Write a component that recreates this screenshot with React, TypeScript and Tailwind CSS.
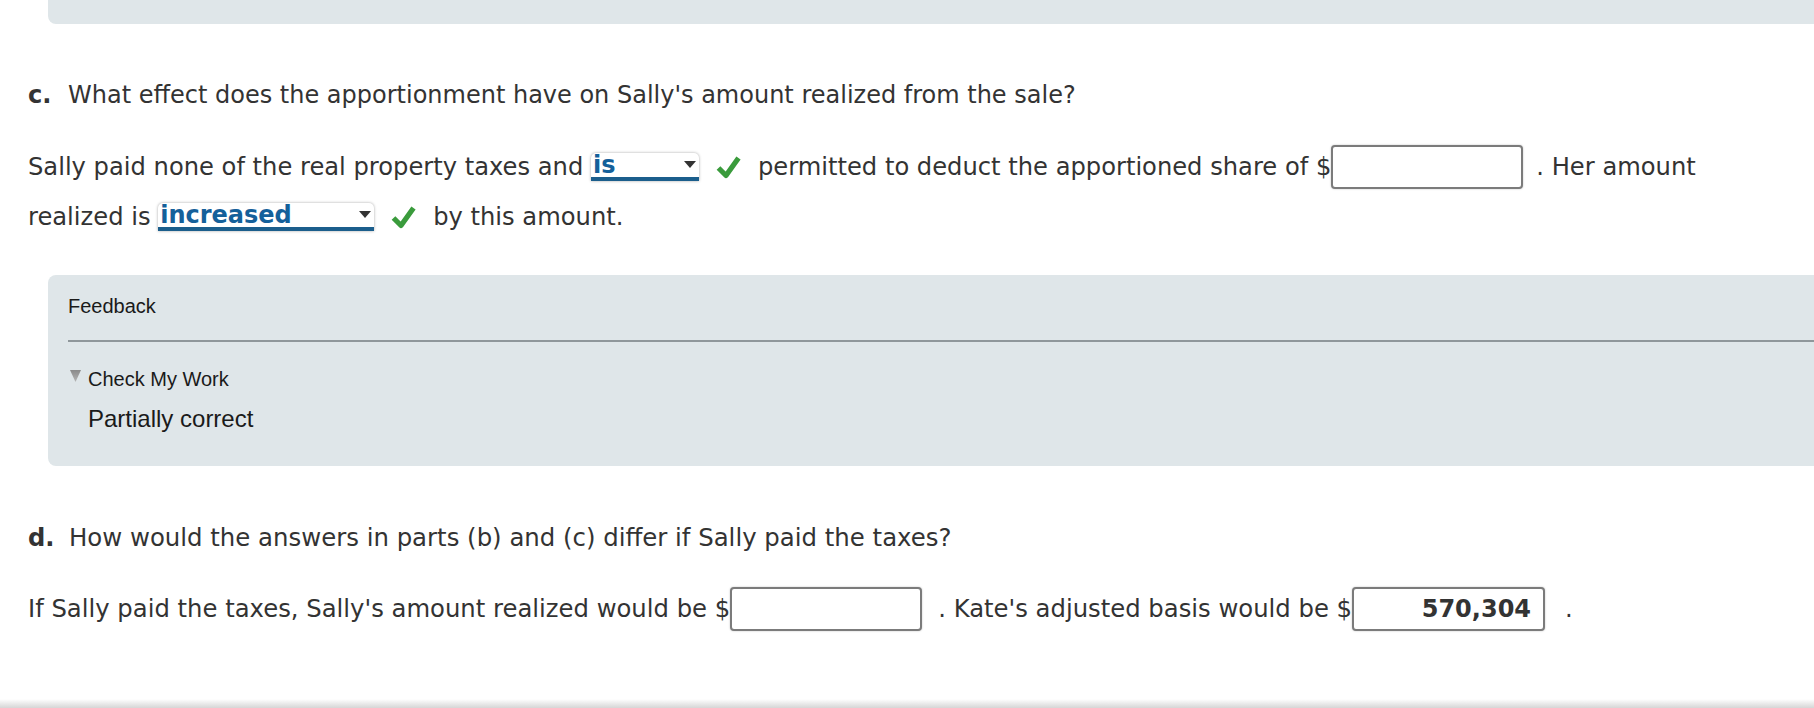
import React from 'react';

function Check() {
  return (
    <svg width="25" height="25" viewBox="0 0 25 25" className="shrink-0">
      <path d="M2.5 13 L10 20.5 L22.5 3" fill="none" stroke="#3a9b3c" strokeWidth="5.2" strokeLinejoin="round" />
    </svg>
  );
}

function Dropdown({ value, width }: { value: string; width: string }) {
  return (
    <span className={`relative inline-flex h-[28px] ${width} items-start rounded-t-[5px] bg-white shadow-[0_0_3px_rgba(0,0,0,0.35)] border-b-[4px] border-[#1b5e8c]`}>
      <span className="pl-[2px] text-[24px] font-bold leading-[25px] text-[#14609a]">{value}</span>
      <svg width="12" height="7" viewBox="0 0 12 7" className="absolute right-[3px] top-[8px]">
        <polygon points="0,0 12,0 6,7" fill="#333" />
      </svg>
    </span>
  );
}

function AmountBox({ value, width }: { value?: string; width: string }) {
  return (
    <span className={`flex h-[44px] ${width} items-center justify-end rounded-[4px] border-2 border-[#7b7b7b] bg-white pr-[12px] shadow-[0_0_2px_rgba(0,0,0,0.25)] text-[24px] font-bold text-[#333]`}>
      {value}
    </span>
  );
}

export default function App() {
  return (
    <div className="relative h-[708px] w-full overflow-hidden bg-white font-['DejaVu_Sans',Verdana,sans-serif] text-[24.2px] text-[#333]">
      {/* previous part panel, cut off at the top */}
      <div className="ml-[48px] h-[24px] rounded-bl-[8px] bg-[#dfe6e9]"></div>

      {/* part c */}
      <div className="mt-[56px] flex h-[30px] items-center pl-[28px] leading-[30px]">
        <span className="w-[40px] font-bold">c.</span>
        <span className="text-[24px]">What effect does the apportionment have on Sally's amount realized from the sale?</span>
      </div>

      <div className="mt-[32px] flex h-[50px] items-center whitespace-pre pl-[28px]">
        <span>Sally paid none of the real property taxes and </span>
        <Dropdown value="is" width="w-[108px]" />
        <span className="mx-[17px]"><Check /></span>
        <span>permitted to deduct the apportioned share of $</span>
        <AmountBox width="w-[192px]" />
        <span className="ml-[13px]">. Her amount</span>
      </div>
      <div className="flex h-[50px] items-center whitespace-pre pl-[28px]">
        <span>realized is </span>
        <Dropdown value="increased" width="w-[216px]" />
        <span className="mx-[17px]"><Check /></span>
        <span>by this amount.</span>
      </div>

      {/* feedback */}
      <div className="ml-[48px] mt-[33px] rounded-l-[8px] bg-[#dfe6e9] pb-[32px] pl-[20px] pt-[19px] font-['Liberation_Sans',Arial,sans-serif] text-[#1a1a1a]">
        <div className="text-[20px] leading-[24px]">Feedback</div>
        <div className="mt-[22px] h-[2px] bg-[#8f979b]"></div>
        <div className="mt-[25px] flex h-[24px] items-center text-[20px] leading-[24px]">
          <svg width="12" height="12" viewBox="0 0 12 12" className="ml-[2px] mr-[6px] -mt-[6px]">
            <defs>
              <linearGradient id="tri" x1="0" y1="0" x2="0" y2="1">
                <stop offset="0" stopColor="#8a8a8a" />
                <stop offset="1" stopColor="#b5b5b5" />
              </linearGradient>
            </defs>
            <polygon points="0,0 11,0 5.5,12" fill="url(#tri)" />
          </svg>
          <span>Check My Work</span>
        </div>
        <div className="mt-[13px] pl-[20px] text-[24px] leading-[30px]">Partially correct</div>
      </div>

      {/* part d */}
      <div className="mt-[57px] flex h-[30px] items-center pl-[28px] leading-[30px]">
        <span className="w-[41px] font-bold">d.</span>
        <span className="text-[24.4px]">How would the answers in parts (b) and (c) differ if Sally paid the taxes?</span>
      </div>

      <div className="mt-[31px] flex h-[50px] items-center whitespace-pre pl-[28px] text-[24.3px]">
        <span>If Sally paid the taxes, Sally's amount realized would be $</span>
        <AmountBox width="w-[192px]" />
        <span className="ml-[16px]">. Kate's adjusted basis would be $</span>
        <AmountBox value="570,304" width="w-[193px]" />
        <span className="ml-[20px]">.</span>
      </div>

      <div className="absolute bottom-0 left-0 right-0 h-[9px] bg-gradient-to-b from-white to-[#d6d6d6]"></div>
    </div>
  );
}
